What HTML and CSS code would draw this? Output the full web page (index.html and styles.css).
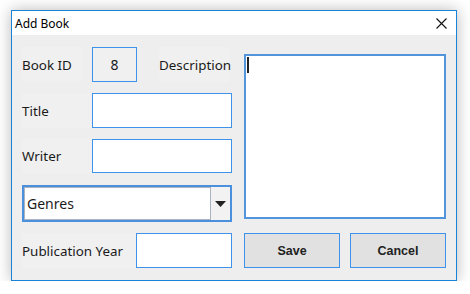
FILE: index.html
```html
<!DOCTYPE html>
<html>
<head>
  <meta charset="UTF-8">
  <title>Add Book</title>
  <link rel="stylesheet" href="styles.css">
</head>
<body>
<div class="window">
  <div class="title-bar">
    <span class="title">Add Book</span>
    <svg class="close" width="11" height="11" viewBox="0 0 11 11">
      <path d="M0.5 0.5 L10.5 10.5 M10.5 0.5 L0.5 10.5" stroke="#111" stroke-width="1.1" fill="none"/>
    </svg>
  </div>
  <div class="content">
    <div class="left">
      <div class="row">
        <span class="label w60">Book ID</span>
        <span class="field id-field">8</span>
        <span class="label desc-label">Description</span>
      </div>
      <div class="row r2">
        <span class="label w70">Title</span>
        <span class="field input w140"></span>
      </div>
      <div class="row r3">
        <span class="label w70">Writer</span>
        <span class="field input w140"></span>
      </div>
      <div class="combo">
        <span class="combo-text">Genres</span>
        <span class="combo-btn">
          <svg width="11" height="6" viewBox="0 0 11 6"><path d="M0 0 H11 L5.5 6 Z" fill="#222"/></svg>
        </span>
      </div>
      <div class="row r5">
        <span class="label w114">Publication Year</span>
        <span class="field input w96"></span>
      </div>
    </div>
    <div class="right">
      <div class="description"><span class="caret"></span></div>
      <div class="buttons">
        <button class="btn">Save</button>
        <button class="btn">Cancel</button>
      </div>
    </div>
  </div>
</div>
</body>
</html>
```

FILE: styles.css
```css
* {
  margin: 0;
  padding: 0;
  box-sizing: border-box;
}

body {
  background: #ffffff;
  font-family: "Noto Sans", "Open Sans", sans-serif;
  color: #1a1a1a;
}

.window {
  margin: 10px 0 0 11px;
  width: 446px;
  height: 271px;
  border: 1px solid #1883d7;
  background: #eeeeee;
  box-shadow: 0 0 14px rgba(0, 0, 0, 0.28);
}

.title-bar {
  height: 24px;
  background: #ffffff;
  display: flex;
  align-items: center;
  justify-content: space-between;
  padding: 0 9px 0 3px;
}

.title {
  font-size: 12px;
  color: #000;
}

.content {
  display: flex;
  gap: 12px;
  padding: 12px 0 0 10px;
}

.left {
  width: 210px;
  display: flex;
  flex-direction: column;
}

.row {
  display: flex;
  height: 35px;
  flex-shrink: 0;
}

.r2 { margin-top: 11px; }
.r3 { margin-top: 11px; height: 34px; }
.r5 { margin-top: 11px; }

.label {
  display: flex;
  align-items: center;
  background: #f0f0f0;
  font-size: 13.4px;
  white-space: nowrap;
}

.w60 { width: 60px; margin-right: 10px; }
.w70 { width: 70px; }
.w114 { width: 114px; }
.w140 { width: 140px; }
.w96 { width: 96px; }

.desc-label {
  width: 70px;
  margin-left: 22px;
}

.field {
  border: 1px solid #3f92ea;
  height: 100%;
}

.id-field {
  width: 45px;
  background: #f0f0f0;
  display: flex;
  align-items: center;
  justify-content: center;
  font-size: 14px;
}

.input {
  background: #ffffff;
}

.combo {
  margin-top: 12px;
  height: 37px;
  display: flex;
  border: 2px solid #4a90dc;
  background: #ffffff;
}

.combo-text {
  flex: 1;
  border: 1px solid #a9b4c0;
  display: flex;
  align-items: center;
  padding-left: 2px;
  font-size: 14px;
}

.combo-btn {
  width: 19px;
  display: flex;
  align-items: center;
  justify-content: center;
  background: #f2f2f2;
}

.right {
  width: 202px;
  display: flex;
  flex-direction: column;
}

.description {
  margin-top: 7px;
  height: 165px;
  border: 2px solid #5395dd;
  background: #ffffff;
  padding: 1px 0 0 1px;
}

.caret {
  display: block;
  width: 2px;
  height: 16px;
  background: #222;
}

.buttons {
  margin-top: 14px;
  display: flex;
  gap: 10px;
}

.btn {
  width: 96px;
  height: 35px;
  background: #e1e1e1;
  border: 1px solid #3f92ea;
  font-family: "Liberation Sans", Arial, sans-serif;
  font-weight: bold;
  font-size: 12.5px;
  color: #222;
}
```
